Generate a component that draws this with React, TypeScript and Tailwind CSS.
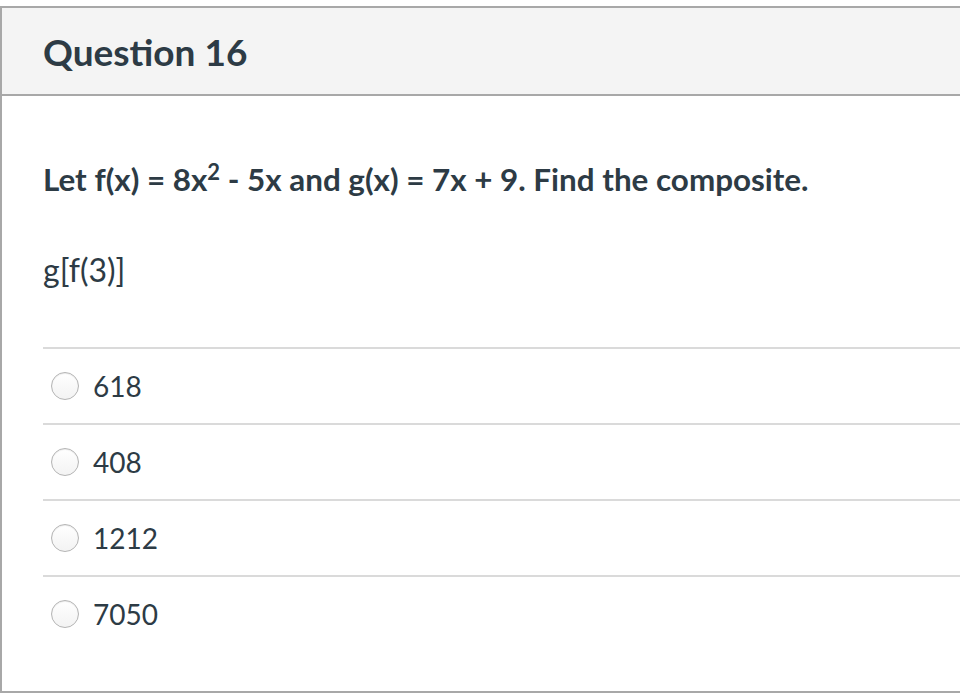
import React from "react";

const answers = ["618", "408", "1212", "7050"];

const Radio = () => (
  <span className="inline-block w-[28px] h-[28px] rounded-full border border-[#b4b4b4] bg-gradient-to-b from-white to-[#f3f3f3] shadow-[inset_0_1px_1px_rgba(0,0,0,0.08)] shrink-0" />
);

export default function App() {
  return (
    <div className="w-[960px] h-[696px] overflow-hidden bg-white pt-[6px] font-['Lato',sans-serif] text-[#2d3b45]">
      <div className="w-[1000px] h-[687px] border-2 border-[#a8a8a8] flex flex-col">
        <div className="h-[88px] bg-[#f4f4f4] border-b-2 border-[#a8a8a8] flex items-center pl-[41px]">
          <h2 className="text-[37px] font-bold leading-none">Question 16</h2>
        </div>
        <div className="pl-[41px] pr-0 pt-[65px]">
          <p className="text-[31.4px] font-bold leading-[36px] whitespace-nowrap">
            Let f(x) = 8x<sup className="text-[22px] relative -top-[11px]">2</sup> - 5x and g(x) = 7x + 9.
            Find the composite.
          </p>
          <p className="text-[32px] leading-[36px] mt-[55px]">g[f(3)]</p>
          <div className="mt-[59px]">
            {answers.map((a) => (
              <div
                key={a}
                className="h-[76px] border-t-2 border-[#dadada] flex items-center gap-[14px] pl-[8px]"
              >
                <Radio />
                <span className="text-[28px]">{a}</span>
              </div>
            ))}
          </div>
        </div>
      </div>
    </div>
  );
}
